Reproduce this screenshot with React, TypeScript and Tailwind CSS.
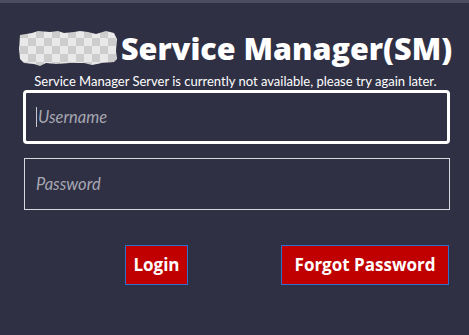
import React from "react";

function Logo() {
  return (
    <svg width="100" height="38" viewBox="0 0 100 38" className="shrink-0">
      <defs>
        <pattern id="chk" width="16" height="16" patternUnits="userSpaceOnUse" x="2" y="1">
          <rect width="16" height="16" fill="#e9e9e9" />
          <rect width="8" height="8" fill="#cdcdcd" />
          <rect x="8" y="8" width="8" height="8" fill="#cdcdcd" />
        </pattern>
      </defs>
      <path
        d="M2 6 L14 4 L20 2 L32 3 L40 2 L46 4 L56 3 L62 2 L70 3 L78 5 L88 2 L96 4 L99 10 L98 22 L99 30 L96 33 L84 34 L74 36 L66 34 L52 34 L38 35 L28 34 L22 37 L16 35 L6 34 L2 30 L1 20 Z"
        fill="url(#chk)"
      />
    </svg>
  );
}

export default function App() {
  return (
    <div
      className="w-[469px] h-[335px] bg-[#2f3044] border-t-[3px] border-[#4b4c60] overflow-hidden flex flex-col"
      style={{ fontFamily: "Lato, 'Noto Sans', sans-serif" }}
    >
      <div className="flex items-center pl-[18px] mt-[25px] h-[40px]">
        <Logo />
        <span
          className="ml-[3px] text-white font-extrabold text-[30.5px] leading-none"
          style={{ fontFamily: "'Open Sans', sans-serif" }}
        >
          Service Manager(SM)
        </span>
      </div>
      <div className="text-center text-white text-[13px] mt-[5px] leading-[16px] pl-[2px]">
        Service Manager Server is currently not available, please try again later.
      </div>
      <div className="px-[23px] mt-[1px] flex flex-col">
        <div className="h-[54px] w-[427px] border-[3px] border-white rounded-[4px] flex items-center pl-[10px]">
          <span className="w-px h-[20px] bg-[#c8c8d0] mr-[1px]" />
          <span className="italic text-[#a7a7b2] text-[16.5px]">Username</span>
        </div>
        <div className="h-[52px] w-[426px] ml-px mt-[14px] border border-[#d8d8dc] flex items-center pl-[11px]">
          <span className="italic text-[#a7a7b2] text-[16.5px]">Password</span>
        </div>
      </div>
      <div className="flex mt-[35px]">
        <button
          className="ml-[125px] w-[63px] h-[40px] bg-[#c00000] border border-[#2f6fd0] text-white font-bold text-[17px]"
          style={{ fontFamily: "'Open Sans', sans-serif" }}
        >
          Login
        </button>
        <button
          className="ml-[93px] w-[168px] h-[40px] bg-[#c00000] border border-[#2f6fd0] text-white font-bold text-[17px]"
          style={{ fontFamily: "'Open Sans', sans-serif" }}
        >
          Forgot Password
        </button>
      </div>
    </div>
  );
}
